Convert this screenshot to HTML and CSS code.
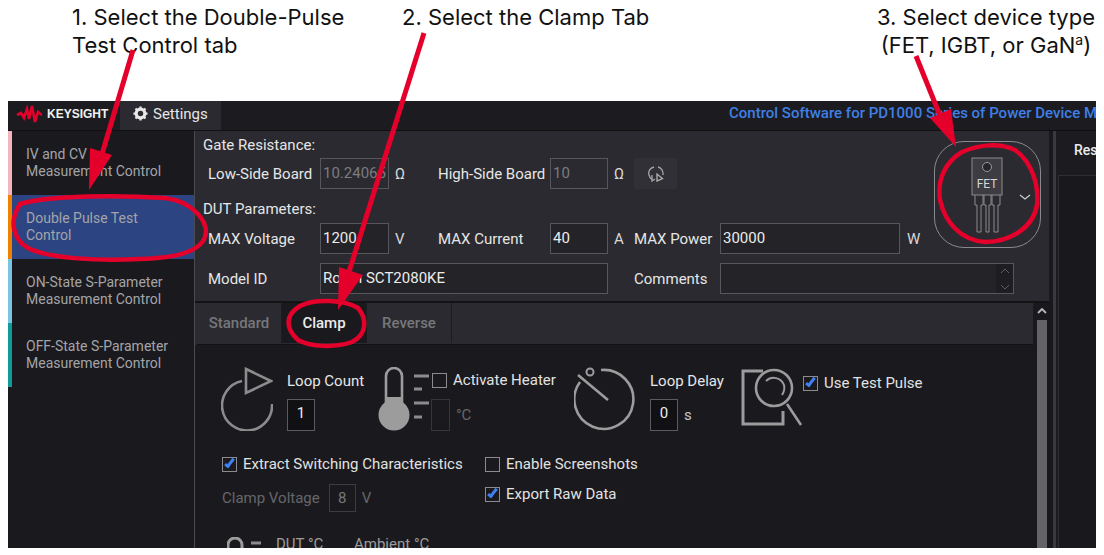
FILE: index.html
```html
<!DOCTYPE html>
<html lang="en">
<head>
    <meta charset="UTF-8">
    <title>Double Pulse Test Control</title>
    <link rel="stylesheet" href="styles.css">
</head>
<body>
<div class="notes">
    <p class="note note-one">1. Select the Double-Pulse<br>Test Control tab</p>
    <p class="note note-two">2. Select the Clamp Tab</p>
    <p class="note note-three">3. Select device type<br>(FET, IGBT, or GaN<sup>a</sup>)</p>
</div>

<div class="app">
    <header class="titlebar">
        <div class="logo-tab">
            <svg class="wave" viewBox="0 0 26 18" width="26" height="18">
                <path d="M1 10L5 8L8 13L11 4L13 14L16 1L19 17L22 7L26 10" fill="none" stroke="#e4002b" stroke-width="2.600"/>
            </svg>
            <span class="brand">KEYSIGHT</span>
        </div>
        <div class="settings-tab">
            <svg viewBox="0 0 16 16" width="15" height="15">
                <circle cx="8" cy="8" r="4.6" fill="none" stroke="#e8e8e8" stroke-width="3.4"/>
                <path d="M8 0.5V3M8 13V15.500M0.500 8H3M13 8H15.500M2.700 2.700L4.500 4.500M11.500 11.500L13.300 13.300M2.700 13.300L4.500 11.500M11.500 4.500L13.300 2.700" stroke="#e8e8e8" stroke-width="2.4"/>
            </svg>
            <span>Settings</span>
        </div>
        <div class="app-title">Control Software for PD1000 Series of Power Device Measurement System</div>
    </header>

    <div class="workspace">
        <nav class="sidebar">
            <a class="side-item strip-pink">IV and CV<br>Measurement Control</a>
            <a class="side-item strip-orange active">Double Pulse Test<br>Control</a>
            <a class="side-item strip-sky">ON-State S-Parameter<br>Measurement Control</a>
            <a class="side-item strip-teal">OFF-State S-Parameter<br>Measurement Control</a>
        </nav>

        <main class="main">
            <section class="params">
                <h2 class="params-head">Gate Resistance:</h2>
                <div class="form-row row-gate">
                    <label class="lbl">Low-Side Board</label>
                    <div class="field field-off">10.24065</div>
                    <span class="unit">Ω</span>
                    <label class="lbl">High-Side Board</label>
                    <div class="field field-off">10</div>
                    <span class="unit">Ω</span>
                    <button class="swap-btn">
                        <svg viewBox="0 0 18 16" width="18" height="16">
                            <path d="M7 1C3 2 1 5 2 9C2.500 11 3.500 12.500 5 13.500M5 9L5 15L8 13M11 1C14 1.500 16.500 5 16 9" fill="none" stroke="#a8a8a8" stroke-width="1.300"/>
                            <path d="M10 8V15L15.500 12.500Z" fill="none" stroke="#b4b4b4" stroke-width="1.300"/>
                        </svg>
                    </button>
                </div>
                <h2 class="params-head head-dut">DUT Parameters:</h2>
                <div class="form-row">
                    <label class="lbl">MAX Voltage</label>
                    <div class="field">1200</div>
                    <span class="unit">V</span>
                    <label class="lbl">MAX Current</label>
                    <div class="field">40</div>
                    <span class="unit">A</span>
                    <label class="lbl">MAX Power</label>
                    <div class="field">30000</div>
                    <span class="unit unit-w">W</span>
                </div>
                <div class="form-row row-model">
                    <label class="lbl">Model ID</label>
                    <div class="field">Rohm SCT2080KE</div>
                    <label class="lbl lbl-comments">Comments</label>
                    <div class="field field-comments">
                        <span class="spin">
                            <svg viewBox="0 0 10 28" width="10" height="28">
                                <path d="M1 8L5 4L9 8M1 20L5 24L9 20" fill="none" stroke="#5c5c62" stroke-width="1"/>
                            </svg>
                        </span>
                    </div>
                </div>

                <button class="device-btn">
                    <svg viewBox="0 0 44 76" width="44" height="76">
                        <rect x="6" y="1" width="30" height="37" fill="#3c3c42" stroke="#8c8c8c"/>
                        <circle cx="21" cy="10" r="4.500" fill="#26262a" stroke="#9a9a9a"/>
                        <text x="21" y="31" class="fet-text" text-anchor="middle">FET</text>
                        <path d="M9 38V48H11V75H15V48H17V38M18 38V48H20V75H23V48H25V38M26 38V48H28V75H32V48H34V38" fill="none" stroke="#8c8c8c"/>
                    </svg>
                    <svg class="chevron" viewBox="0 0 12 7" width="12" height="7">
                        <path d="M1 1L6 5L11 1" fill="none" stroke="#d0d0d0" stroke-width="1.200"/>
                    </svg>
                </button>
            </section>

            <div class="tabs">
                <a class="tab">Standard</a>
                <a class="tab tab-active">Clamp</a>
                <a class="tab">Reverse</a>
            </div>

            <div class="tab-body">
                <section class="clamp">
                    <div class="opts">
                        <svg class="icon-loop" viewBox="0 0 52 64" width="52" height="64">
                            <path d="M21 14A25 25 0 1 0 51 37" fill="none" stroke="#8c8c8c" stroke-width="2.600"/>
                            <path d="M25 2L50 14L25 26Z" fill="none" stroke="#8c8c8c" stroke-width="2.600"/>
                        </svg>
                        <div class="opt opt-loop">
                            <span class="opt-label">Loop Count</span>
                            <div class="box">1</div>
                        </div>
                        <svg class="icon-therm" viewBox="0 0 52 64" width="52" height="64">
                            <path d="M8 46V9A8 8 0 0 1 24 9V46" fill="none" stroke="#9c9c9c" stroke-width="2.600"/>
                            <circle cx="16" cy="48" r="15.500" fill="#9c9c9c"/>
                            <rect x="9" y="30" width="14" height="10" fill="#9c9c9c"/>
                            <path d="M36 9H51M36 22H44M36 36H51M36 50H44" stroke="#8c8c8c" stroke-width="3"/>
                        </svg>
                        <div class="opt opt-heater">
                            <label class="check check-top"><span class="tick"></span>Activate Heater</label>
                            <div class="heater-row">
                                <div class="box box-slim"></div>
                                <span class="deg">°C</span>
                            </div>
                        </div>
                        <svg class="icon-timer" viewBox="0 0 62 64" width="62" height="64">
                            <path d="M27 3A29.500 29.500 0 1 1 6 15" fill="none" stroke="#9c9c9c" stroke-width="2.600"/>
                            <path d="M4 8L34 33" stroke="#9c9c9c" stroke-width="2.600"/>
                            <circle cx="16" cy="5" r="3.500" fill="none" stroke="#9c9c9c" stroke-width="2"/>
                        </svg>
                        <div class="opt opt-delay">
                            <span class="opt-label">Loop Delay</span>
                            <div class="delay-row">
                                <div class="box">0</div>
                                <span class="sec">s</span>
                            </div>
                        </div>
                        <svg class="icon-report" viewBox="0 0 62 60" width="62" height="60">
                            <path d="M22 4H2V57H42V44" fill="none" stroke="#9c9c9c" stroke-width="3"/>
                            <circle cx="33" cy="21" r="18" fill="none" stroke="#9c9c9c" stroke-width="2.600"/>
                            <path d="M25 14A11 11 0 0 1 43 18C44 22 43 25 41 28" fill="none" stroke="#9c9c9c" stroke-width="2"/>
                            <path d="M46 37L60 58" stroke="#9c9c9c" stroke-width="2.600"/>
                        </svg>
                        <label class="check check-pulse"><span class="tick on"></span>Use Test Pulse</label>
                    </div>

                    <div class="checks">
                        <label class="check"><span class="tick on"></span>Extract Switching Characteristics</label>
                        <label class="check"><span class="tick"></span>Enable Screenshots</label>
                        <div class="clamp-volt">
                            <span>Clamp Voltage</span>
                            <div class="box box-volt">8</div>
                            <span>V</span>
                        </div>
                        <label class="check check-raw"><span class="tick on"></span>Export Raw Data</label>
                    </div>

                    <div class="temps">
                        <svg viewBox="0 0 34 14" width="34" height="14">
                            <path d="M1 14V8A7 7 0 0 1 15 8V14" fill="none" stroke="#9c9c9c" stroke-width="3"/>
                            <path d="M24 6H34" stroke="#8c8c8c" stroke-width="3"/>
                        </svg>
                        <span class="temp-dut">DUT °C</span>
                        <span>Ambient °C</span>
                    </div>
                </section>
                <aside class="scroll">
                    <svg viewBox="0 0 10 6" width="10" height="6">
                        <path d="M1 5L5 1L9 5" fill="none" stroke="#b8b8b8" stroke-width="1.800"/>
                    </svg>
                    <div class="thumb"></div>
                </aside>
            </div>
        </main>

        <aside class="results">
            <div class="results-head">Results</div>
            <div class="results-body"></div>
        </aside>
    </div>
</div>

<svg class="marks" viewBox="0 0 1104 555" width="1104" height="555">
    <g fill="none" stroke="#e4002b" stroke-width="5">
        <path d="M133 50L102 154"/>
        <path d="M424 33L348 275"/>
        <path d="M916 56L941 118"/>
    </g>
    <g fill="none" stroke="#e4002b" stroke-width="4.500">
        <path d="M20 204C50 195 120 195 165 198C195 202 206 222 206 232C205 250 180 258 140 259C100 261 50 259 28 248C14 240 8 222 20 204Z"/>
        <path d="M300 306C315 298 345 300 358 308C368 320 366 335 352 342C335 348 310 347 298 340C285 328 285 315 300 306Z"/>
        <path d="M962 152C980 144 1000 143 1015 150C1032 162 1039 185 1037 205C1033 228 1010 242 985 242C960 240 945 222 940 200C937 180 945 162 962 152Z"/>
    </g>
    <g fill="#e4002b">
        <path d="M89 190L90 148L112 155Z"/>
        <path d="M338 310L339 267L363 275Z"/>
        <path d="M956 147L930 118L951 109Z"/>
    </g>
</svg>
</body>
</html>
```
FILE: styles.css
```css
html, body {
    margin: 0;
    height: 555px;
    overflow: hidden;
    background-color: #ffffff;
}
body {
    position: relative;
    font-family: Roboto, Arial, sans-serif;
    font-size: 15px;
}
p, h2 {
    margin: 0;
}

/* instructions above the window */
.notes {
    display: flex;
    height: 101px;
    padding: 3px 9px 0 72px;
    box-sizing: border-box;
    font-family: Inter, "Liberation Sans", sans-serif;
    font-size: 22px;
    line-height: 28px;
    color: #111111;
}
.note-one {
    width: 330px;
}
.note-three {
    margin-left: auto;
    text-align: center;
}
.note sup {
    font-size: 14px;
    line-height: 0;
}

/* app window */
.app {
    width: 1088px;
    height: 447px;
    margin-left: 8px;
    background-color: #19191d;
    color: #e6e6e6;
    overflow: hidden;
}
.titlebar {
    display: flex;
    align-items: center;
    height: 29px;
    background-color: #1c1c20;
}
.logo-tab {
    display: flex;
    align-items: center;
    gap: 5px;
    width: 112px;
    height: 100%;
    padding: 0 0 4px 8px;
    box-sizing: border-box;
}
.brand {
    font-family: "Liberation Sans", Arial, sans-serif;
    font-size: 12px;
    font-weight: bold;
    color: #f0f0f0;
}
.settings-tab {
    display: flex;
    align-items: center;
    gap: 5px;
    width: 101px;
    height: 100%;
    padding: 0 0 4px 13px;
    box-sizing: border-box;
    background-color: #2a2a30;
}
.app-title {
    flex: 1;
    min-width: 0;
    margin-left: 508px;
    padding-bottom: 5px;
    white-space: nowrap;
    overflow: hidden;
    font-weight: 500;
    color: #3f7fe6;
}
.workspace {
    display: flex;
    height: 418px;
    border-top: 1px solid #101013;
    box-sizing: border-box;
}

/* left menu */
.sidebar {
    width: 186px;
    flex: none;
    border-right: 1px solid #4a4a50;
    background-color: #1a1a1e;
}
.side-item {
    display: flex;
    align-items: center;
    height: 64px;
    padding-left: 14px;
    border-left: 4px solid;
    box-sizing: border-box;
    font-size: 14px;
    line-height: 17px;
    color: #a4a4a8;
}
.side-item.active {
    background-color: #2c4482;
}
.strip-pink { border-left-color: #f4b4c0; }
.strip-orange { border-left-color: #f08000; }
.strip-sky { border-left-color: #7cc4e4; }
.strip-teal { border-left-color: #109a98; }

/* main column */
.main {
    position: relative;
    width: 854px;
    flex: none;
    background-color: #2a2a30;
    display: flex;
    flex-direction: column;
}
.params {
    height: 172px;
    padding: 6px 0 0 8px;
    box-sizing: border-box;
    border-bottom: 2px solid #131316;
}
.params-head {
    font-size: 15px;
    font-weight: 400;
    line-height: 17px;
    color: #e6e6e6;
}
.head-dut {
    margin-top: 12px;
}
.form-row {
    display: grid;
    grid-template-columns: 112px 69px 49px 112px 58px 26px 86px 180px 30px;
    align-items: center;
    height: 31px;
    margin-top: 5px;
    padding-left: 5px;
}
.row-gate {
    margin-top: 4px;
}
.row-model {
    margin-top: 9px;
    grid-template-columns: 112px 288px 112px 294px;
}
.lbl {
    white-space: nowrap;
}
.lbl-comments {
    padding-left: 26px;
}
.field {
    height: 31px;
    padding-left: 2px;
    border: 1px solid #56565c;
    box-sizing: border-box;
    line-height: 29px;
    background-color: #232328;
    white-space: nowrap;
    overflow: hidden;
    color: #ececec;
}
.field-off {
    background-color: #2a2a30;
    color: #7c7c80;
}
.field-comments {
    display: flex;
    justify-content: flex-end;
}
.spin {
    display: flex;
    align-items: center;
    justify-content: center;
    width: 17px;
    background-color: #1e1e22;
}
.unit {
    padding-left: 6px;
    color: #d8d8d8;
}
.unit-w {
    padding-left: 7px;
}
.swap-btn {
    display: flex;
    align-items: center;
    justify-content: center;
    width: 43px;
    height: 31px;
    padding: 0;
    border: none;
    border-radius: 2px;
    background-color: #303036;
}
.device-btn {
    position: absolute;
    top: 10px;
    left: 739px;
    display: flex;
    align-items: center;
    justify-content: flex-start;
    width: 107px;
    height: 107px;
    padding: 0 0 0 31px;
    border: 1px solid #8a8a8e;
    border-radius: 30px;
    box-sizing: border-box;
    background-color: #2a2a30;
}
.chevron {
    margin-left: 9px;
    margin-top: 6px;
}
.fet-text {
    font-family: Roboto, Arial, sans-serif;
    font-size: 12px;
    fill: #d8d8d8;
}

/* Standard / Clamp / Reverse */
.tabs {
    display: flex;
    height: 42px;
    flex: none;
    margin-left: 2px;
    margin-right: 16px;
    padding-bottom: 1px;
    border-bottom: 1px solid #131316;
    box-sizing: border-box;
}
.tab {
    display: flex;
    align-items: center;
    justify-content: center;
    width: 85px;
    border-right: 1px solid #1c1c20;
    box-sizing: border-box;
    font-weight: 500;
    color: #77777b;
}
.tab-active {
    background-color: #1a1a1e;
    color: #ececec;
}
.tab-body {
    position: relative;
    flex: 1;
    min-height: 0;
    background-color: #1a1a1e;
}
.scroll {
    position: absolute;
    top: -42px;
    right: 0;
    bottom: 0;
    width: 16px;
    padding: 5px 2px 0 4px;
    background-color: #19191d;
    display: flex;
    flex-direction: column;
    align-items: center;
    box-sizing: border-box;
}
.thumb {
    width: 10px;
    flex: 1;
    margin-top: 6px;
    background-color: #636368;
}

/* clamp tab */
.clamp {
    padding: 22px 0 0 26px;
}
.opts {
    display: flex;
    align-items: flex-start;
    height: 64px;
}
.opt {
    display: flex;
    flex-direction: column;
    justify-content: space-between;
    height: 64px;
    box-sizing: border-box;
}
.opt-label {
    line-height: 28px;
}
.opt-loop {
    width: 91px;
    margin-left: 14px;
}
.opt-heater {
    width: 143px;
    margin-left: 1px;
}
.opt-delay {
    width: 91px;
    margin-left: 14px;
}
.icon-therm {
    display: block;
}
.box {
    width: 28px;
    height: 32px;
    border: 1px solid #5a5a60;
    box-sizing: border-box;
    line-height: 27px;
    text-align: center;
    background-color: #111114;
    color: #ececec;
}
.box-slim {
    width: 19px;
    border-color: #36363a;
    background-color: #1a1a1e;
}
.heater-row, .delay-row {
    display: flex;
    align-items: center;
    gap: 6px;
}
.deg {
    color: #66666a;
}
.sec {
    color: #c8c8c8;
}
.check {
    display: flex;
    align-items: center;
    gap: 6px;
    line-height: 16px;
    white-space: nowrap;
    color: #e2e2e2;
}
.check-top {
    padding: 5px 0 0 1px;
}
.check-pulse {
    margin: 8px 0 0 0;
}
.check-raw {
    align-self: start;
    padding-top: 2px;
}
.tick {
    position: relative;
    width: 15px;
    height: 15px;
    flex: none;
    border: 1px solid #8c8c90;
    box-sizing: border-box;
}
.tick.on::after {
    content: "";
    position: absolute;
    left: 4px;
    top: -1px;
    width: 5px;
    height: 11px;
    border-right: 3px solid #3f80f0;
    border-bottom: 3px solid #3f80f0;
    box-sizing: border-box;
    transform: rotate(38deg);
}
.checks {
    display: grid;
    grid-template-columns: 263px auto;
    grid-template-rows: 20px 28px;
    row-gap: 10px;
    margin-top: 23px;
    margin-left: 1px;
    align-items: center;
}
.clamp-volt {
    display: flex;
    align-items: center;
    gap: 6px;
    color: #66666a;
}
.box-volt {
    width: 27px;
    height: 28px;
    margin-left: 3px;
    line-height: 26px;
    border-color: #3c3c42;
    background-color: #1a1a1e;
    color: #77777b;
}
.temps {
    display: flex;
    align-items: center;
    margin-top: 23px;
    margin-left: 6px;
    color: #9c9c9c;
}
.temp-dut {
    margin-left: 15px;
    width: 78px;
}

/* right column, cut off by the window */
.results {
    flex: 1;
    min-width: 0;
    margin-left: 4px;
    border-left: 3px solid #3a3a3e;
    background-color: #1c1c20;
    overflow: hidden;
}
.results-head {
    height: 44px;
    padding: 11px 0 0 18px;
    box-sizing: border-box;
    font-size: 14px;
    font-weight: 500;
    white-space: nowrap;
    color: #ececec;
}
.results-body {
    height: 100%;
    margin-left: 2px;
    border-top: 1px solid #2e2e33;
    border-left: 1px solid #2e2e33;
    background-color: #19191d;
}

/* red callouts drawn over the screenshot */
.marks {
    position: absolute;
    top: 0;
    left: 0;
    pointer-events: none;
}
```
